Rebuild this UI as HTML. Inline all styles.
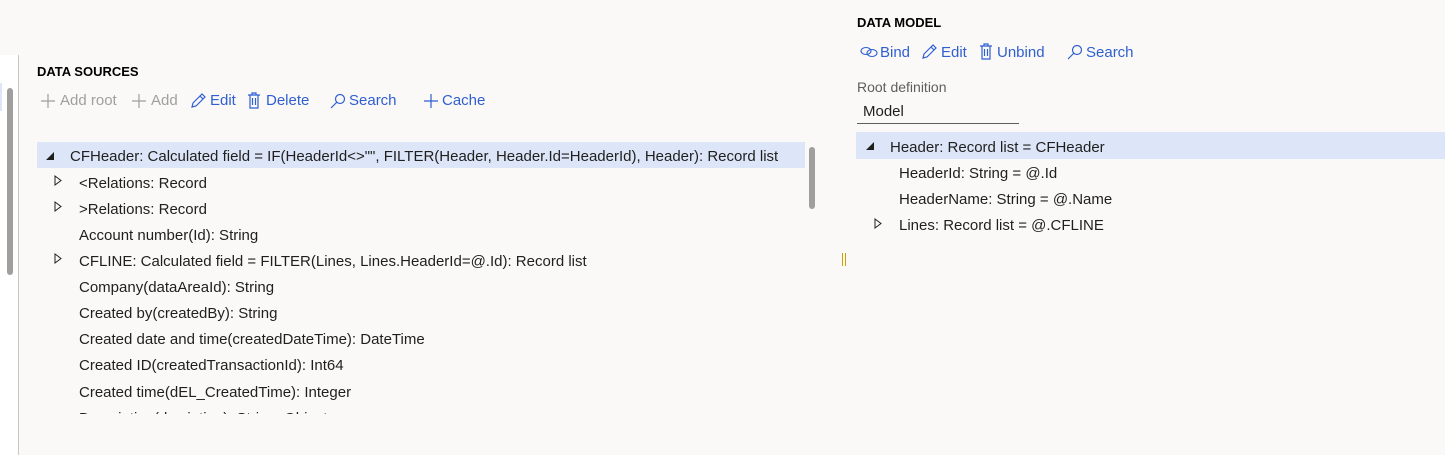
<!DOCTYPE html>
<html><head><style>
body{margin:0;width:1445px;height:455px;background:#faf9f8;position:relative;overflow:hidden;font-family:"Liberation Sans",sans-serif;color:#201f1e}
.a{position:absolute;white-space:nowrap}
.h{font-weight:bold;font-size:13px;color:#000}
.t{font-size:15px;letter-spacing:0}
.bl{color:#2f5fd0;font-size:15px}
.gr{color:#a19f9d;font-size:15px}
.sel{position:absolute;background:#dce6f8}
svg{position:absolute}
</style></head><body>
<div class="a" style="left:0;top:55px;width:18px;height:400px;background:#fff"></div>
<div class="a" style="left:0;top:83px;width:2px;height:28px;background:#dce6f8"></div>
<div class="a" style="left:18px;top:55px;width:1px;height:400px;background:#c8c6c4"></div>
<div class="a" style="left:7px;top:88px;width:6px;height:187px;background:#a19f9d;border-radius:3px"></div>

<div class="a h" style="left:37px;top:64px">DATA SOURCES</div>
<svg style="left:40px;top:93px" width="16" height="16" viewBox="0 0 16 16"><path d="M8 1v14M1 8h14" stroke="#a19f9d" stroke-width="1.2"/></svg>
<div class="a gr" style="left:60px;top:92px">Add root</div>
<svg style="left:131px;top:93px" width="16" height="16" viewBox="0 0 16 16"><path d="M8 1v14M1 8h14" stroke="#a19f9d" stroke-width="1.2"/></svg>
<div class="a gr" style="left:151px;top:92px">Add</div>
<svg style="left:190px;top:93px" width="16" height="16" viewBox="0 0 16 16"><path d="M2 14l1-4 9-9 3 3-9 9zM10 3l3 3" stroke="#2f5fd0" stroke-width="1.2" fill="none"/></svg>
<div class="a bl" style="left:210px;top:92px">Edit</div>
<svg style="left:247px;top:92px" width="14" height="17" viewBox="0 0 14 17"><path d="M1 3h12M5 3V1h4v2M3 3v13h8V3M5.5 6v7M8.5 6v7" stroke="#2f5fd0" stroke-width="1.2" fill="none"/></svg>
<div class="a bl" style="left:266px;top:92px">Delete</div>
<svg style="left:330px;top:93px" width="16" height="16" viewBox="0 0 16 16"><circle cx="10" cy="6" r="4.5" stroke="#2f5fd0" stroke-width="1.2" fill="none"/><path d="M7 9l-6 6" stroke="#2f5fd0" stroke-width="1.2"/></svg>
<div class="a bl" style="left:349px;top:92px">Search</div>
<svg style="left:423px;top:93px" width="16" height="16" viewBox="0 0 16 16"><path d="M8 1v14M1 8h14" stroke="#2f5fd0" stroke-width="1.2"/></svg>
<div class="a bl" style="left:442px;top:92px">Cache</div>

<div class="sel" style="left:37px;top:142px;width:768px;height:26px"></div>
<div class="a" style="left:809px;top:147px;width:6px;height:62px;background:#a19f9d;border-radius:3px"></div>
<svg style="left:46px;top:152px" width="8" height="8"><path d="M8 0v8H0z" fill="#201f1e"/></svg>
<div class="a t" style="left:70px;top:148px">CFHeader: Calculated field = IF(HeaderId&lt;&gt;"", FILTER(Header, Header.Id=HeaderId), Header): Record list</div>
<svg style="left:54px;top:175px" width="8" height="11"><path d="M1 1l6 4.5L1 10z" stroke="#201f1e" fill="none"/></svg>
<div class="a t" style="left:79px;top:175px">&lt;Relations: Record</div>
<svg style="left:54px;top:201px" width="8" height="11"><path d="M1 1l6 4.5L1 10z" stroke="#201f1e" fill="none"/></svg>
<div class="a t" style="left:79px;top:201px">&gt;Relations: Record</div>
<div class="a t" style="left:79px;top:227px">Account number(Id): String</div>
<svg style="left:54px;top:253px" width="8" height="11"><path d="M1 1l6 4.5L1 10z" stroke="#201f1e" fill="none"/></svg>
<div class="a t" style="left:79px;top:253px">CFLINE: Calculated field = FILTER(Lines, Lines.HeaderId=@.Id): Record list</div>
<div class="a t" style="left:79px;top:279px">Company(dataAreaId): String</div>
<div class="a t" style="left:79px;top:305px">Created by(createdBy): String</div>
<div class="a t" style="left:79px;top:331px">Created date and time(createdDateTime): DateTime</div>
<div class="a t" style="left:79px;top:357px">Created ID(createdTransactionId): Int64</div>
<div class="a t" style="left:79px;top:384px">Created time(dEL_CreatedTime): Integer</div>
<div class="a" style="left:79px;top:410px;height:4px;overflow:hidden"><div class="t">Description(dscription): String, Object</div></div>

<div class="a" style="left:842px;top:253px;width:1px;height:13px;background:#c8a000"></div>
<div class="a" style="left:845px;top:253px;width:1px;height:13px;background:#c8a000"></div>

<div class="a h" style="left:857px;top:15px">DATA MODEL</div>
<svg style="left:860px;top:46px" width="18" height="12" viewBox="0 0 18 12"><ellipse cx="6" cy="5" rx="5" ry="3.5" stroke="#2f5fd0" fill="none" stroke-width="1.1"/><ellipse cx="12" cy="7" rx="5" ry="3.5" stroke="#2f5fd0" fill="none" stroke-width="1.1"/></svg>
<div class="a bl" style="left:880px;top:44px">Bind</div>
<svg style="left:921px;top:44px" width="16" height="16" viewBox="0 0 16 16"><path d="M2 14l1-4 9-9 3 3-9 9zM10 3l3 3" stroke="#2f5fd0" stroke-width="1.2" fill="none"/></svg>
<div class="a bl" style="left:941px;top:44px">Edit</div>
<svg style="left:979px;top:43px" width="14" height="17" viewBox="0 0 14 17"><path d="M1 3h12M5 3V1h4v2M3 3v13h8V3M5.5 6v7M8.5 6v7" stroke="#2f5fd0" stroke-width="1.2" fill="none"/></svg>
<div class="a bl" style="left:997px;top:44px">Unbind</div>
<svg style="left:1067px;top:44px" width="16" height="16" viewBox="0 0 16 16"><circle cx="10" cy="6" r="4.5" stroke="#2f5fd0" stroke-width="1.2" fill="none"/><path d="M7 9l-6 6" stroke="#2f5fd0" stroke-width="1.2"/></svg>
<div class="a bl" style="left:1086px;top:44px">Search</div>
<div class="a" style="left:857px;top:79px;font-size:14px;color:#605e5c">Root definition</div>
<div class="a t" style="left:863px;top:103px">Model</div>
<div class="a" style="left:857px;top:123px;width:162px;height:1px;background:#605e5c"></div>
<div class="sel" style="left:856px;top:132px;width:589px;height:27px"></div>
<svg style="left:866px;top:142px" width="8" height="8"><path d="M8 0v8H0z" fill="#201f1e"/></svg>
<div class="a t" style="left:890px;top:139px">Header: Record list = CFHeader</div>
<div class="a t" style="left:899px;top:165px">HeaderId: String = @.Id</div>
<div class="a t" style="left:899px;top:191px">HeaderName: String = @.Name</div>
<svg style="left:874px;top:218px" width="8" height="11"><path d="M1 1l6 4.5L1 10z" stroke="#201f1e" fill="none"/></svg>
<div class="a t" style="left:899px;top:217px">Lines: Record list = @.CFLINE</div>
</body></html>
